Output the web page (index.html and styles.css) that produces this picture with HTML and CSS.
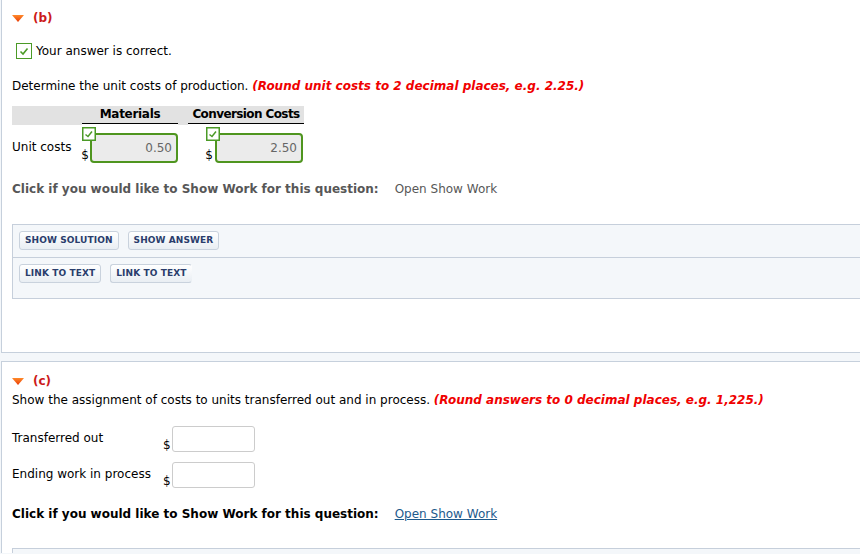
FILE: index.html
```html
<!DOCTYPE html>
<html>
<head>
<meta charset="utf-8">
<link rel="stylesheet" href="styles.css">
</head>
<body>
<div class="part part-b">
  <div class="part-head">
    <svg class="tri" width="12" height="7" viewBox="0 0 12 7"><defs><linearGradient id="tg" x1="0" y1="0" x2="0" y2="1"><stop offset="0" stop-color="#ff8a2a"/><stop offset="1" stop-color="#e83a05"/></linearGradient></defs><polygon points="0,0 12,0 6,7" fill="url(#tg)"/></svg>
    <span class="part-label">(b)</span>
  </div>
  <div class="correct">
    <svg class="chk" width="16" height="16" viewBox="0 0 16 16"><rect x="0.5" y="0.5" width="15" height="15" fill="#fff" stroke="#4b9a26"/><polyline points="4.5,8.5 7,11 11.5,5.5" fill="none" stroke="#4b9a26" stroke-width="1.6"/></svg>
    <span>Your answer is correct.</span>
  </div>
  <p class="question">Determine the unit costs of production. <em class="note">(Round unit costs to 2 decimal places, e.g. 2.25.)</em></p>
  <div class="cost-grid">
    <div class="hd hd-blank"></div>
    <div class="hd hd-col hd-mat">Materials</div>
    <div class="hd hd-gap"></div>
    <div class="hd hd-col hd-conv">Conversion Costs</div>
    <div class="row-label">Unit costs</div>
    <div class="cell cell-mat">
      <span class="ans">
        <svg class="chk-sm" width="14" height="14" viewBox="0 0 14 14"><rect x="0.75" y="0.75" width="12.5" height="12.5" fill="#fff" stroke="#4b9a26" stroke-width="1.5"/><polyline points="3.5,7.5 6,9.5 10,4.5" fill="none" stroke="#4b9a26" stroke-width="1.5"/></svg>
        <span class="dollar">$</span><span class="box ok">0.50</span>
      </span>
    </div>
    <div></div>
    <div class="cell cell-conv">
      <span class="ans">
        <svg class="chk-sm" width="14" height="14" viewBox="0 0 14 14"><rect x="0.75" y="0.75" width="12.5" height="12.5" fill="#fff" stroke="#4b9a26" stroke-width="1.5"/><polyline points="3.5,7.5 6,9.5 10,4.5" fill="none" stroke="#4b9a26" stroke-width="1.5"/></svg>
        <span class="dollar">$</span><span class="box ok">2.50</span>
      </span>
    </div>
  </div>
  <div class="showwork gray">
    <span class="sw-label">Click if you would like to Show Work for this question:</span>
    <span class="sw-link plain">Open Show Work</span>
  </div>
  <div class="tools">
    <div class="tool-row">
      <span class="btn">SHOW SOLUTION</span>
      <span class="btn">SHOW ANSWER</span>
    </div>
    <div class="tool-row tool-row-2">
      <span class="btn">LINK TO TEXT</span>
      <span class="btn btn-noright">LINK TO TEXT</span>
    </div>
  </div>
</div>
<div class="part part-c">
  <div class="part-head">
    <svg class="tri" width="12" height="7" viewBox="0 0 12 7"><defs><linearGradient id="tg2" x1="0" y1="0" x2="0" y2="1"><stop offset="0" stop-color="#ff8a2a"/><stop offset="1" stop-color="#e83a05"/></linearGradient></defs><polygon points="0,0 12,0 6,7" fill="url(#tg2)"/></svg>
    <span class="part-label">(c)</span>
  </div>
  <p class="question q-c">Show the assignment of costs to units transferred out and in process. <em class="note">(Round answers to 0 decimal places, e.g. 1,225.)</em></p>
  <div class="assign">
    <div class="a-label">Transferred out</div>
    <div class="a-field"><span class="dollar">$</span><span class="box empty"></span></div>
    <div class="a-label">Ending work in process</div>
    <div class="a-field"><span class="dollar">$</span><span class="box empty"></span></div>
  </div>
  <div class="showwork">
    <span class="sw-label">Click if you would like to Show Work for this question:</span>
    <a class="sw-link" href="#">Open Show Work</a>
  </div>
  <div class="tools tools-bottom"></div>
</div>
</body>
</html>
```
FILE: styles.css
```css
html, body {
  margin: 0;
  padding: 0;
}
body {
  background: #f4f7fa;
  font-family: Verdana, "DejaVu Sans", sans-serif;
  font-size: 12px;
  color: #000;
  overflow: hidden;
  height: 554px;
}
.part {
  background: #fff;
  margin-left: 1px;
  border-left: 1px solid #c6d0dc;
  padding-left: 10px;
}
.part-b {
  border-bottom: 1px solid #c6d0dc;
  padding-top: 10px;
  padding-bottom: 53px;
}
.part-c {
  margin-top: 8px;
  border-top: 1px solid #c6d0dc;
  padding-top: 11px;
}
.part-head {
  display: flex;
  align-items: center;
  height: 16px;
  gap: 9px;
}
.tri {
  display: block;
}
.part-label {
  font-weight: bold;
  color: #cc1a1a;
  line-height: 16px;
}
.correct {
  display: flex;
  align-items: center;
  gap: 4px;
  margin-top: 17px;
  margin-left: 4px;
  height: 16px;
  line-height: 16px;
}
.chk {
  display: block;
}
.question {
  margin: 19px 0 0;
  line-height: 16px;
}
.q-c {
  margin-top: 3px;
}
.note {
  color: #f00000;
  font-weight: bold;
  font-style: italic;
}
.cost-grid {
  display: grid;
  grid-template-columns: 70px 96px 10px 116px;
  grid-template-rows: 19px 38px;
  margin-top: 12px;
  width: 292px;
}
.hd {
  background: #e2e2e2;
}
.hd-col {
  font-weight: bold;
  text-align: center;
  white-space: nowrap;
  letter-spacing: -0.3px;
  line-height: 17px;
  border-bottom: 1px solid #000;
  height: 17px;
  box-sizing: content-box;
}
.hd-conv {
  letter-spacing: -0.6px;
}
.row-label {
  line-height: 16px;
  padding-top: 14px;
}
.cell {
  display: flex;
  justify-content: flex-end;
  align-items: flex-start;
  padding-top: 8px;
}
.ans {
  position: relative;
  display: flex;
  align-items: flex-end;
}
.chk-sm {
  position: absolute;
  left: 1px;
  top: -6px;
  display: block;
}
.dollar {
  line-height: 12px;
  padding-bottom: 2px;
}
.box {
  display: block;
  box-sizing: border-box;
}
.box.ok {
  width: 88px;
  height: 30px;
  margin-left: 1px;
  border: 2px solid #4f951f;
  border-radius: 4px;
  background: #ebebeb;
  color: #666;
  text-align: right;
  line-height: 26px;
  padding-right: 4px;
}
.cell-conv .box.ok {
  margin-left: 2px;
}
.cell-conv .ans {
  margin-right: 1px;
}
.showwork {
  margin-top: 18px;
  line-height: 16px;
  display: flex;
  gap: 16px;
}
.showwork .sw-label {
  font-weight: bold;
}
.showwork.gray {
  color: #575757;
}
.sw-link {
  color: #1d5a8c;
  text-decoration: underline;
}
.sw-link.plain {
  color: #575757;
  text-decoration: none;
}
.tools {
  margin-top: 27px;
  margin-right: -20px;
  background: #f4f7fa;
  border: 1px solid #c6cfdb;
}
.tool-row {
  display: flex;
  gap: 9px;
  padding: 6px 6px 0;
  height: 26px;
}
.tool-row-2 {
  border-top: 1px solid #c6cfdb;
  height: 34px;
}
.btn {
  display: block;
  box-sizing: border-box;
  height: 19px;
  line-height: 17px;
  padding: 0 5px;
  border: 1px solid #c9d2dd;
  border-radius: 3px;
  background: linear-gradient(#ffffff, #e9eef3);
  color: #2a3d6c;
  font-size: 9px;
  font-weight: bold;
  letter-spacing: 0.1px;
}
.btn-noright {
  border-right-color: transparent;
}
.assign {
  display: grid;
  grid-template-columns: 151px auto;
  row-gap: 10px;
  margin-top: 18px;
  justify-content: start;
}
.a-label {
  line-height: 16px;
  padding-top: 4px;
}
.a-field {
  display: flex;
  align-items: flex-end;
}
.a-field .dollar {
  width: 9px;
  padding-bottom: 1px;
}
.box.empty {
  width: 83px;
  height: 26px;
  border: 1px solid #cccccc;
  border-radius: 3px;
  background: #fff;
}
.part-c .showwork {
  margin-top: 18px;
}
.part-c .tools-bottom {
  margin-top: 26px;
  height: 4px;
  border-bottom: none;
}
```
